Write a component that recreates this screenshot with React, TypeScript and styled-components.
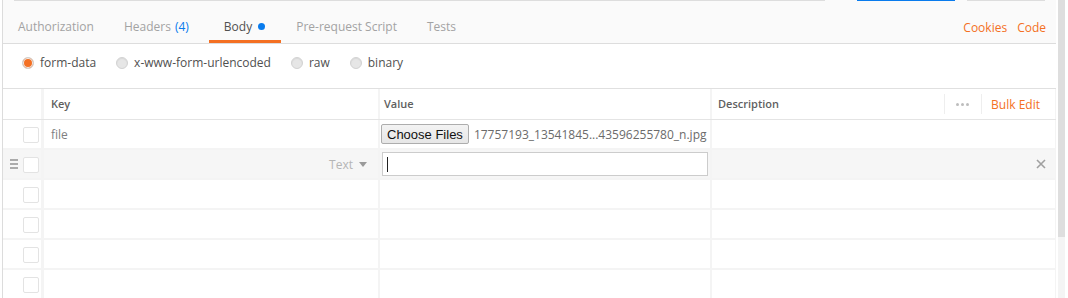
import * as React from 'react';
import styled, { createGlobalStyle } from 'styled-components';

const orange = '#f47023';
const blue = '#097bed';

const GlobalStyle = createGlobalStyle`
  html, body {
    margin: 0;
    padding: 0;
    background: #ffffff;
  }
  body {
    font-family: 'Open Sans', 'Liberation Sans', sans-serif;
    font-size: 12px;
    color: #505050;
  }
`;

const Page = styled.div`
  display: flex;
  width: 1068px;
  height: 298px;
  overflow: hidden;
  background: #ffffff;
`;

const Main = styled.div`
  margin-left: 2px;
  border-left: 1px solid #dcdcdc;
  width: 1053px;
  display: flex;
  flex-direction: column;
  overflow: hidden;

  & > * {
    flex-shrink: 0;
  }
`;

const ScrollTrack = styled.div`
  width: 7px;
  margin-left: 2px;
  background: #f4f4f4;
  display: flex;
  flex-direction: column;
`;

const ScrollThumb = styled.div`
  height: 237px;
  background: #dedede;
`;

/* ---------- tabs ---------- */

const TabHeader = styled.div`
  background: #fafafa;
  border-bottom: 1px solid #dddddd;
`;

const TopEdge = styled.div`
  display: flex;
  height: 1px;
`;

interface EdgeProps {
  $w: number;
  $ml: number;
  $color: string;
}

const Edge = styled.div<EdgeProps>`
  width: ${(p: EdgeProps) => p.$w}px;
  margin-left: ${(p: EdgeProps) => p.$ml}px;
  background: ${(p: EdgeProps) => p.$color};
`;

const TabRow = styled.div`
  display: flex;
  height: 42px;
  padding-right: 10px;
`;

interface TabProps {
  $active?: boolean;
}

const Tab = styled.div<TabProps>`
  box-sizing: border-box;
  height: 42px;
  padding: 18px 15px 0;
  line-height: 16px;
  white-space: nowrap;
  color: ${(p: TabProps) => (p.$active ? '#505050' : '#a3a3a3')};
  border-bottom: 3px solid ${(p: TabProps) => (p.$active ? orange : 'transparent')};
`;

const Count = styled.span`
  color: ${blue};
  margin-left: 4px;
  margin-right: 5px;
`;

const Dot = styled.span`
  display: inline-block;
  width: 7px;
  height: 7px;
  border-radius: 50%;
  background: ${blue};
  margin-left: 6px;
  margin-right: 1px;
  vertical-align: 1px;
`;

const Links = styled.div`
  margin-left: auto;
  display: flex;
  gap: 10px;
  padding-top: 19px;
  line-height: 16px;
`;

const Link = styled.span`
  color: ${orange};
`;

/* ---------- body type radios ---------- */

const RadioRow = styled.div`
  box-sizing: border-box;
  height: 44px;
  padding: 11px 0 0 19px;
  display: flex;
  align-items: flex-start;
  gap: 20px;
  background: #ffffff;
`;

const RadioItem = styled.label`
  display: flex;
  align-items: center;
  gap: 6px;
  line-height: 16px;
  color: #505050;
`;

interface RadioProps {
  $checked?: boolean;
}

const Radio = styled.span<RadioProps>`
  box-sizing: border-box;
  width: 12px;
  height: 12px;
  margin-top: -1px;
  border-radius: 50%;
  border: 1px solid #d2d2d2;
  background: ${(p: RadioProps) => (p.$checked ? orange : '#e6e6e6')};
  box-shadow: ${(p: RadioProps) => (p.$checked ? 'inset 0 0 0 1px #f0f0f0' : 'inset 0 1px 1px #d8d8d8')};
`;

/* ---------- key / value table ---------- */

const Table = styled.div`
  border-top: 1px solid #e0e0e0;
  display: flex;
  flex-direction: column;
`;

interface RowProps {
  $head?: boolean;
  $hover?: boolean;
}

const Row = styled.div<RowProps>`
  box-sizing: border-box;
  display: grid;
  grid-template-columns: 41px 336px 332px 1fr;
  height: ${(p: RowProps) => (p.$head ? 31 : 30)}px;
  flex-shrink: 0;
  background: ${(p: RowProps) => (p.$hover ? '#f6f6f6' : '#ffffff')};
  border-bottom: ${(p: RowProps) => (p.$head ? '1px solid #e4e4e4' : '2px solid #f4f4f4')};
`;

interface CellProps {
  $pl?: number;
  $pr?: number;
  $sep: number;
}

const Cell = styled.div<CellProps>`
  box-sizing: border-box;
  display: flex;
  align-items: center;
  min-width: 0;
  padding-left: ${(p: CellProps) => p.$pl || 0}px;
  padding-right: ${(p: CellProps) => p.$pr || 0}px;
  border-right: ${(p: CellProps) => p.$sep}px solid #f4f4f4;
`;

const CheckCell = styled.div`
  box-sizing: border-box;
  display: flex;
  align-items: flex-start;
  padding: 7px 2px 0 7px;
  border-right: 3px solid #f4f4f4;
`;

const CheckBox = styled.span`
  box-sizing: border-box;
  width: 16px;
  height: 16px;
  margin-left: auto;
  border: 1px solid #e3e3e3;
  border-radius: 2px;
  background: #ffffff;
`;

const Handle = styled.span`
  display: flex;
  flex-direction: column;
  gap: 2px;
  width: 8px;
  margin-top: 2px;

  & > i {
    display: block;
    height: 2px;
    background: #ababab;
  }
`;

const HeadLabel = styled.span`
  font-size: 11px;
  font-weight: 600;
  color: #5f5f5f;
  margin-top: -1px;
`;

const HeadSep = styled.span`
  width: 1px;
  height: 20px;
  background: #eeeeee;
`;

const MoreDots = styled.span`
  display: flex;
  gap: 2px;
  padding: 0 12px 0 11px;

  & > i {
    display: block;
    width: 3px;
    height: 3px;
    border-radius: 50%;
    background: #bdbdbd;
  }
`;

const BulkEdit = styled.span`
  margin-left: 9px;
  color: ${orange};
`;

const KeyText = styled.span`
  color: #808080;
`;

const TypeSelect = styled.span`
  margin-left: auto;
  display: flex;
  align-items: center;
  gap: 6px;
  color: #b5b5b5;
`;

const Caret = styled.span`
  width: 0;
  height: 0;
  border-left: 4px solid transparent;
  border-right: 4px solid transparent;
  border-top: 5px solid #9a9a9a;
`;

const FileButton = styled.button`
  height: 20px;
  margin: 0 5px 0 1px;
  padding: 0 5px;
  font-family: 'Liberation Sans', Arial, sans-serif;
  font-size: 13px;
  color: #111111;
  background: linear-gradient(#f3f3f3, #e6e6e6);
  border: 1px solid #adadad;
  border-radius: 2px;
  white-space: nowrap;
`;

const FileName = styled.span`
  color: #6b6b6b;
  white-space: nowrap;
  overflow: hidden;
`;

const ValueInput = styled.div`
  box-sizing: border-box;
  width: 326px;
  height: 24px;
  margin-left: 2px;
  border: 1px solid #cccccc;
  background: #ffffff;
  display: flex;
  align-items: center;
  padding-left: 4px;

  &::before {
    content: '';
    width: 1px;
    height: 15px;
    background: #222222;
  }
`;

const RemoveIcon = styled.svg`
  margin-left: auto;
  width: 10px;
  height: 10px;
`;

const emptyRows = [0, 1, 2, 3];

export default function App() {
  return (
    <>
      <GlobalStyle />
      <Page>
        <Main>
          <TabHeader>
            <TopEdge>
              <Edge $w={811} $ml={11} $color="#dddddd" />
              <Edge $w={98} $ml={32} $color={blue} />
              <Edge $w={78} $ml={12} $color="#dddddd" />
            </TopEdge>
            <TabRow>
              <Tab>Authorization</Tab>
              <Tab>
                Headers<Count>(4)</Count>
              </Tab>
              <Tab $active>
                Body<Dot />
              </Tab>
              <Tab>Pre-request Script</Tab>
              <Tab>Tests</Tab>
              <Links>
                <Link>Cookies</Link>
                <Link>Code</Link>
              </Links>
            </TabRow>
          </TabHeader>

          <RadioRow>
            <RadioItem>
              <Radio $checked />
              form-data
            </RadioItem>
            <RadioItem>
              <Radio />
              x-www-form-urlencoded
            </RadioItem>
            <RadioItem>
              <Radio />
              raw
            </RadioItem>
            <RadioItem>
              <Radio />
              binary
            </RadioItem>
          </RadioRow>

          <Table>
            <Row $head>
              <Cell $sep={3} />
              <Cell $sep={2} $pl={7}>
                <HeadLabel>Key</HeadLabel>
              </Cell>
              <Cell $sep={2} $pl={4}>
                <HeadLabel>Value</HeadLabel>
              </Cell>
              <Cell $sep={1} $pl={6} $pr={15}>
                <HeadLabel>Description</HeadLabel>
                <span style={{ marginLeft: 'auto' }} />
                <HeadSep />
                <MoreDots>
                  <i />
                  <i />
                  <i />
                </MoreDots>
                <HeadSep />
                <BulkEdit>Bulk Edit</BulkEdit>
              </Cell>
            </Row>

            <Row>
              <CheckCell>
                <CheckBox />
              </CheckCell>
              <Cell $sep={2} $pl={7}>
                <KeyText>file</KeyText>
              </Cell>
              <Cell $sep={2}>
                <FileButton type="button">Choose Files</FileButton>
                <FileName>17757193_13541845...43596255780_n.jpg</FileName>
              </Cell>
              <Cell $sep={1} />
            </Row>

            <Row $hover>
              <CheckCell>
                <Handle>
                  <i />
                  <i />
                  <i />
                </Handle>
                <CheckBox />
              </CheckCell>
              <Cell $sep={2} $pr={11}>
                <TypeSelect>
                  Text
                  <Caret />
                </TypeSelect>
              </Cell>
              <Cell $sep={2}>
                <ValueInput />
              </Cell>
              <Cell $sep={1} $pr={9}>
                <RemoveIcon viewBox="0 0 10 10">
                  <path d="M1 1 L9 9 M9 1 L1 9" stroke="#a0a0a0" strokeWidth="1.6" fill="none" />
                </RemoveIcon>
              </Cell>
            </Row>

            {emptyRows.map((i) => (
              <Row key={i}>
                <CheckCell>
                  <CheckBox />
                </CheckCell>
                <Cell $sep={2} />
                <Cell $sep={2} />
                <Cell $sep={1} />
              </Row>
            ))}
          </Table>
        </Main>
        <ScrollTrack>
          <ScrollThumb />
        </ScrollTrack>
      </Page>
    </>
  );
}
